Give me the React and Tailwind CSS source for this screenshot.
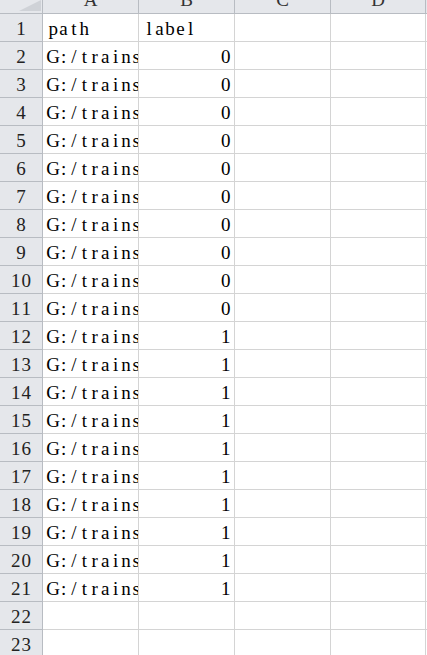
import React from "react";

const rows = Array.from({ length: 23 }, (_, i) => {
  const n = i + 1;
  if (n === 1) return { n, a: "path", b: "label", isHeader: true };
  if (n <= 11) return { n, a: "G:/trainset/cat.jpg", b: "0" };
  if (n <= 21) return { n, a: "G:/trainset/dog.jpg", b: "1" };
  return { n, a: "", b: "" };
});

const serif = { fontFamily: '"Liberation Serif", "Noto Sans CJK SC", serif' };

function Mono({ text }) {
  return (
    <span className="inline-flex whitespace-nowrap">
      {text.split("").map((ch, i) => (
        <span key={i} className="inline-flex w-[10.4px] justify-center">
          <span className="inline-block">{ch}</span>
        </span>
      ))}
    </span>
  );
}

export default function App() {
  return (
    <div className="w-[427px] h-[655px] overflow-hidden bg-white" style={serif}>
      <div className="grid grid-cols-[43px_96px_96px_96px_95px_1fr]">
        <div className="relative h-[14px] bg-[#e5e7eb] border-r border-b border-[#b8bcc2] overflow-hidden">
          <svg className="absolute left-[19px] top-0" width="22" height="11" viewBox="0 0 22 11">
            <polygon points="22,0 22,11 0,11" fill="#cfd2d7" />
          </svg>
        </div>
        {["A", "B", "C", "D"].map((c) => (
          <div
            key={c}
            className="h-[14px] bg-[#e5e7eb] border-r border-b border-[#b8bcc2] overflow-hidden flex justify-center items-end"
          >
            <span className="text-[19px] leading-none text-[#333] mb-[4px]">{c}</span>
          </div>
        ))}
        <div className="h-[14px] bg-[#e5e7eb] border-b border-[#b8bcc2]" />

        {rows.map((r) => (
          <React.Fragment key={r.n}>
            <div className="h-[28px] bg-[#e5e7eb] border-r border-b border-[#b8bcc2] flex items-end justify-center pb-[3px] text-[19px] leading-none text-[#222]">
              <Mono text={String(r.n)} />
            </div>
            <div className="h-[28px] border-r border-b border-[#d4d4d4] overflow-hidden whitespace-nowrap flex items-end pl-[5px] pb-[3px] text-[19px] leading-none text-black">
              {r.a && <Mono text={r.a} />}
            </div>
            <div
              className={
                "h-[28px] border-r border-b border-[#d4d4d4] overflow-hidden whitespace-nowrap flex items-end pb-[3px] text-[19px] leading-none text-black " +
                (r.isHeader ? "justify-start pl-[5px]" : "justify-end pr-[3px]")
              }
            >
              {r.b && <Mono text={r.b} />}
            </div>
            <div className="h-[28px] border-r border-b border-[#d4d4d4]" />
            <div className="h-[28px] border-r border-b border-[#d4d4d4]" />
            <div className="h-[28px] border-b border-[#d4d4d4]" />
          </React.Fragment>
        ))}
      </div>
    </div>
  );
}
